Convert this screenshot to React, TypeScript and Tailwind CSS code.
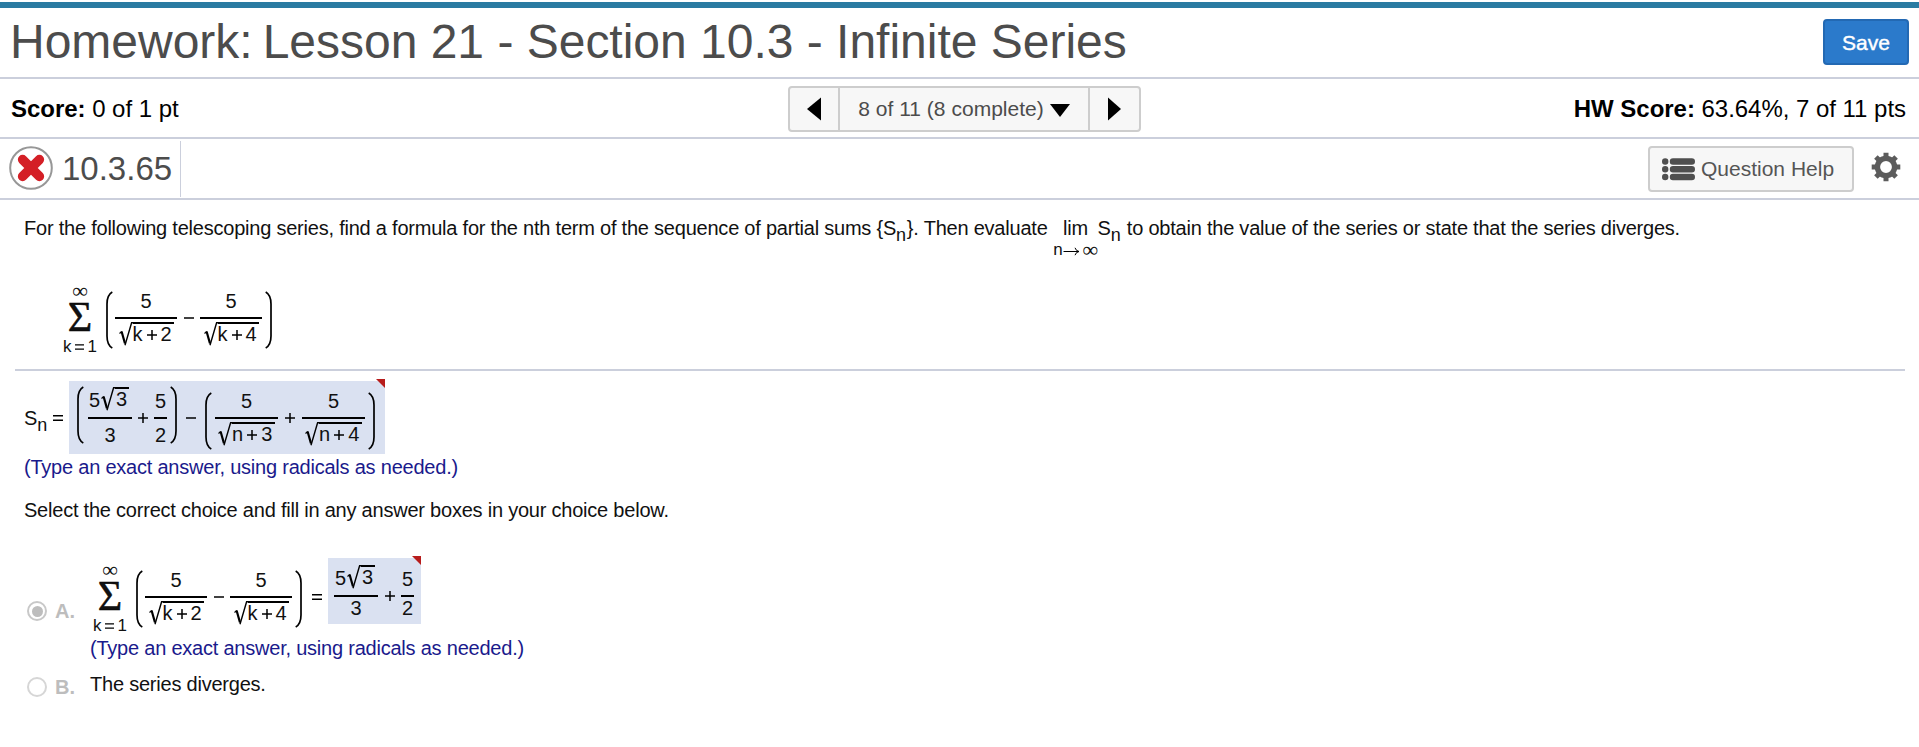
import React from 'react';

interface FracProps {
  num: React.ReactNode;
  den: React.ReactNode;
  className?: string;
  numClass?: string;
  denClass?: string;
}

// Numerator and denominator have equal heights so the bar always sits on the row axis
const Frac: React.FC<FracProps> = ({ num, den, className = '', numClass = 'pb-[6px]', denClass = 'pt-[6px]' }) => (
  <div className={`flex flex-col items-center shrink-0 ${className}`}>
    <div className={`h-[32px] flex items-end justify-center ${numClass}`}>{num}</div>
    <div className="h-[2px] w-full bg-black" />
    <div className={`h-[32px] flex items-start justify-center ${denClass}`}>{den}</div>
  </div>
);

const Root: React.FC<{ children: React.ReactNode; className?: string }> = ({ children, className = '' }) => (
  <span className="flex items-start h-[24px]">
    <svg width="14" height="24" viewBox="0 0 14 24" fill="none" stroke="black" className="shrink-0">
      <path d="M0.5 11.5 L2.8 9.5" strokeWidth="1.2" />
      <path d="M2.6 9.5 L6 21.5" strokeWidth="2.2" />
      <path d="M6 23.2 L12.6 0.8 H14" strokeWidth="1.4" />
    </svg>
    <span className={`border-t-2 border-black h-[24px] whitespace-nowrap ${className}`}>{children}</span>
  </span>
);

const Paren: React.FC<{ side: 'left' | 'right'; className?: string }> = ({ side, className = '' }) => (
  <svg width="7" height="58" viewBox="0 0 7 58" fill="none" stroke="black" strokeWidth="1.7" className={`shrink-0 ${className}`}>
    {side === 'left' ? (
      <path d="M6.3 1 Q1 4 1 13 V45 Q1 54 6.3 57" />
    ) : (
      <path d="M0.7 1 Q6 4 6 13 V45 Q6 54 0.7 57" />
    )}
  </svg>
);

const Op: React.FC<{ kind: 'plus' | 'minus' | 'equals'; className?: string }> = ({ kind, className = '' }) => (
  <svg width="10" height="10" viewBox="0 0 10 10" stroke="black" strokeWidth="1.5" className={`shrink-0 ${className}`}>
    {kind === 'equals' ? (
      <path d="M0 2.7 H10 M0 7.3 H10" />
    ) : (
      <path d={kind === 'plus' ? 'M0 5 H10 M5 0 V10' : 'M0 5 H10'} />
    )}
  </svg>
);

// Radicand like "k + 2" with tight spacing round the plus
const Radicand: React.FC<{ a: string; b: string }> = ({ a, b }) => (
  <span className="flex items-center h-[20px]">
    <span>{a}</span>
    <Op kind="plus" className="ml-[4px] mr-[4px] mt-[2px]" />
    <span>{b}</span>
  </span>
);

const Series = () => (
  <div className="flex items-center h-[76px]">
    <div className="flex flex-col items-center w-[32px] h-[76px] shrink-0">
      <span className="font-['Liberation_Serif',serif] text-[22px] leading-[18px] h-[18px] mt-[2px]">∞</span>
      <span className="font-['Liberation_Serif',serif] text-[42px] leading-[34px] h-[34px] [-webkit-text-stroke:0.5px_black]">Σ</span>
      <span className="flex items-center text-[17px] leading-[18px] mt-[4px]">
        k<Op kind="equals" className="w-[9px] ml-[3px] mr-[4px]" />1
      </span>
    </div>
    <Paren side="left" className="ml-[10px] mt-[3px]" />
    <Frac className="w-[62px] ml-[2px]" num="5" den={<Root className="w-[41px]"><Radicand a="k" b="2" /></Root>} denClass="pt-[3px]" />
    <Op kind="minus" className="ml-[7px] mr-[6px]" />
    <Frac className="w-[62px]" num="5" den={<Root className="w-[41px]"><Radicand a="k" b="4" /></Root>} denClass="pt-[3px]" />
    <Paren side="right" className="ml-[3px] mt-[3px]" />
  </div>
);

const FiveRootThree = () => (
  <span className="flex h-[24px] -ml-[2px]">
    <span className="mt-[3px] mr-px">5</span>
    <Root className="w-[14px] pl-px">3</Root>
  </span>
);

// Red corner of an incorrect answer box
const WrongMark = () => (
  <span className="absolute right-0 -top-[2px] w-0 h-0 border-t-[9px] border-t-[#b71c1c] border-l-[9px] border-l-transparent" />
);

const Sn = () => (
  <span>
    S<span className="relative top-[6px] text-[18px] leading-none mr-px">n</span>
  </span>
);

export default function App() {
  return (
    <div className="h-[747px] w-full bg-white overflow-hidden font-['Liberation_Sans',Arial,sans-serif] text-black">
      <div className="mt-[2px] h-[6px] bg-[#2a7ba2]" />

      {/* Title bar */}
      <header className="flex items-start justify-between h-[71px] border-b-2 border-[#cbcfdc] pl-[10px] pr-[10px]">
        <h1 className="mt-[7px] text-[48px] leading-[54px] text-[#4c4c4c] whitespace-nowrap tracking-[-0.01px]">
          <span>Homework:</span>
          <span className="ml-[10px]">Lesson 21 - Section 10.3 - Infinite Series</span>
        </h1>
        <button className="mt-[11px] pt-[2px] w-[86px] h-[46px] rounded-[4px] border-2 border-[#2369b3] bg-[#2b7acb] text-white text-[21px] [-webkit-text-stroke:0.4px_white]">
          Save
        </button>
      </header>

      {/* Score and question navigation */}
      <div className="relative flex items-center justify-between h-[60px] border-b-2 border-[#cbcfdc] pl-[11px] pr-[13px] pt-[2px] text-[24px] tracking-[-0.03px]">
        <div><b>Score:</b> 0 of 1 pt</div>
        <div className="absolute left-[788px] top-[7px] flex w-[353px] h-[46px] rounded-[4px] border-2 border-[#cdcdcd] bg-[#f7f7f7]">
          <button className="w-[50px] border-r-2 border-[#cdcdcd] flex items-center justify-center">
            <svg width="14" height="24" viewBox="0 0 14 24"><path d="M14 0.5 V23.5 L0 12 Z" /></svg>
          </button>
          <button className="w-[250px] border-r-2 border-[#cdcdcd] flex items-center justify-center gap-[6px] text-[21px] text-[#4c4c4c] tracking-[0.02px]">
            <span className="whitespace-nowrap">8 of 11 (8 complete)</span>
            <svg width="20" height="13" viewBox="0 0 20 13" className="mt-[2px]"><path d="M0 0 H20 L10 13 Z" fill="black" /></svg>
          </button>
          <button className="flex-1 flex items-center justify-center">
            <svg width="13" height="24" viewBox="0 0 13 24"><path d="M0 0.5 V23.5 L13 12 Z" /></svg>
          </button>
        </div>
        <div><b>HW Score:</b> 63.64%, 7 of 11 pts</div>
      </div>

      {/* Question bar */}
      <div className="flex items-start justify-between h-[61px] border-b-2 border-[#cbcfdc] pl-[9px] pr-[18px]">
        <div className="flex items-center h-[56px] mt-[2px] border-r border-[#cbcfdc] w-[172px]">
          <svg width="44" height="44" viewBox="0 0 44 44" className="shrink-0 -mt-[2px]">
            <circle cx="22" cy="22" r="20.8" fill="white" stroke="#979797" strokeWidth="2" />
            <path d="M13.6 13.6 L30.4 30.4 M30.4 13.6 L13.6 30.4" stroke="#d41f26" strokeWidth="9.5" strokeLinecap="round" />
          </svg>
          <span className="ml-[9px] text-[33px] leading-[36px] text-[#4c4c4c]">10.3.65</span>
        </div>
        <div className="flex items-start">
          <button className="mt-[7px] w-[206px] h-[46px] rounded-[4px] border-2 border-[#cdcdcd] bg-[#f7f7f7] flex items-center pl-[12px] text-[21px] text-[#555] whitespace-nowrap">
            <svg width="33" height="23" viewBox="0 0 33 23" stroke="#4f4f4f" strokeWidth="6.4" strokeLinecap="round" className="mr-[6px] mt-px shrink-0">
              <path d="M3.2 3.5 h0.01 M3.2 11.2 h0.01 M3.2 19 h0.01 M11 3.5 H29.8 M11 11.2 H29.8 M11 19 H29.8" />
            </svg>
            Question Help
          </button>
          <svg width="30" height="30" viewBox="0 0 30 30" className="mt-[13px] ml-[17px]" fill="none" stroke="#5c5c5c">
            <circle cx="15" cy="15" r="8.6" strokeWidth="5.4" />
            <path d="M15 0.7 V5 M15 25 V29.3 M0.7 15 H5 M25 15 H29.3 M4.9 4.9 L8 8 M22 22 L25.1 25.1 M25.1 4.9 L22 8 M8 22 L4.9 25.1" strokeWidth="5" />
          </svg>
        </div>
      </div>

      {/* Problem statement */}
      <div className="ml-[15px] mr-[14px] pl-[9px] h-[171px] border-b-2 border-[#cbcfdc] text-[20px] leading-[24px] text-[#111]">
        <div className="flex pt-[16px] h-[86px] whitespace-nowrap tracking-[-0.22px]">
          <span>
            For the following telescoping series, find a formula for the nth term of the sequence of partial sums {'{'}<Sn />{'}'}. Then evaluate
          </span>
          <span className="flex flex-col items-center w-[44px] ml-[6px]">
            <span>lim</span>
            <span className="flex items-center text-[17px] leading-[20px]">
              n
              <svg width="17" height="9" viewBox="0 0 17 9" fill="none" stroke="black" className="mt-[2px] ml-px mr-[2px]">
                <path d="M0.5 4.5 H16 M12 0.8 Q13 4 16 4.5 Q13 5 12 8.2" />
              </svg>
              <span className="font-['Liberation_Serif',serif] text-[22px]">∞</span>
            </span>
          </span>
          <span><Sn /> to obtain the value of the series or state that the series diverges.</span>
        </div>
        <div className="pl-[40px] -mt-[6px] leading-[20px]">
          <Series />
        </div>
      </div>

      {/* Answers */}
      <div className="pl-[24px] text-[20px] leading-[20px] text-[#111]">
        <div className="flex mt-[10px] h-[73px]">
          <span className="mt-[27px] w-[29px] shrink-0"><Sn /></span>
          <Op kind="equals" className="mt-[32px] mr-[6px]" />
          <div className="relative flex items-center w-[316px] h-[73px] bg-[#dae1f1] pl-[8px]">
            <WrongMark />
            <Paren side="left" className="-mt-[6px]" />
            <Frac className="w-[44px] ml-[4px]" num={<FiveRootThree />} den="3" />
            <Op kind="plus" className="mx-[6px]" />
            <Frac className="w-[13px]" num="5" den="2" />
            <Paren side="right" className="ml-[3px] -mt-[6px]" />
            <Op kind="minus" className="mx-[9px]" />
            <Paren side="left" className="mt-[6px]" />
            <Frac className="w-[63px] ml-[3px]" num="5" den={<Root className="w-[43px]"><Radicand a="n" b="3" /></Root>} denClass="pt-[3px]" />
            <Op kind="plus" className="mx-[7px]" />
            <Frac className="w-[63px]" num="5" den={<Root className="w-[43px]"><Radicand a="n" b="4" /></Root>} denClass="pt-[3px]" />
            <Paren side="right" className="ml-[3px] mt-[6px]" />
          </div>
        </div>
        <p className="mt-[3px] text-[#1a1a8c] tracking-[-0.22px]">(Type an exact answer, using radicals as needed.)</p>
        <p className="mt-[23px] tracking-[-0.22px]">Select the correct choice and fill in any answer boxes in your choice below.</p>

        <div className="flex mt-[39px]">
          <span className="mt-[42px] ml-[3px] w-[20px] h-[20px] rounded-full border-2 border-[#c8c8c8] flex items-center justify-center">
            <span className="w-[11px] h-[11px] rounded-full bg-[#bdbdbd]" />
          </span>
          <b className="mt-[42px] ml-[8px] w-[35px] text-[#bdbdbd]">A.</b>
          <div>
            <div className="flex pl-[4px] h-[79px]">
              <Series />
              <Op kind="equals" className="mt-[33px] ml-[10px]" />
              <div className="relative flex items-center w-[93px] h-[66px] ml-[6px] -mt-px bg-[#dae1f1] pl-[6px] pt-[10px]">
                <WrongMark />
                <Frac className="w-[44px]" num={<FiveRootThree />} den="3" denClass="pt-px" />
                <Op kind="plus" className="ml-[7px] mr-[6px]" />
                <Frac className="w-[13px]" num="5" den="2" denClass="pt-px" />
              </div>
            </div>
            <p className="text-[#1a1a8c] tracking-[-0.22px]">(Type an exact answer, using radicals as needed.)</p>
          </div>
        </div>

        <div className="flex mt-[16px]">
          <span className="mt-[3px] ml-[3px] w-[20px] h-[20px] rounded-full border-2 border-[#d6d6d6]" />
          <b className="mt-[3px] ml-[8px] w-[35px] text-[#bdbdbd]">B.</b>
          <span className="tracking-[-0.22px]">The series diverges.</span>
        </div>
      </div>
    </div>
  );
}
